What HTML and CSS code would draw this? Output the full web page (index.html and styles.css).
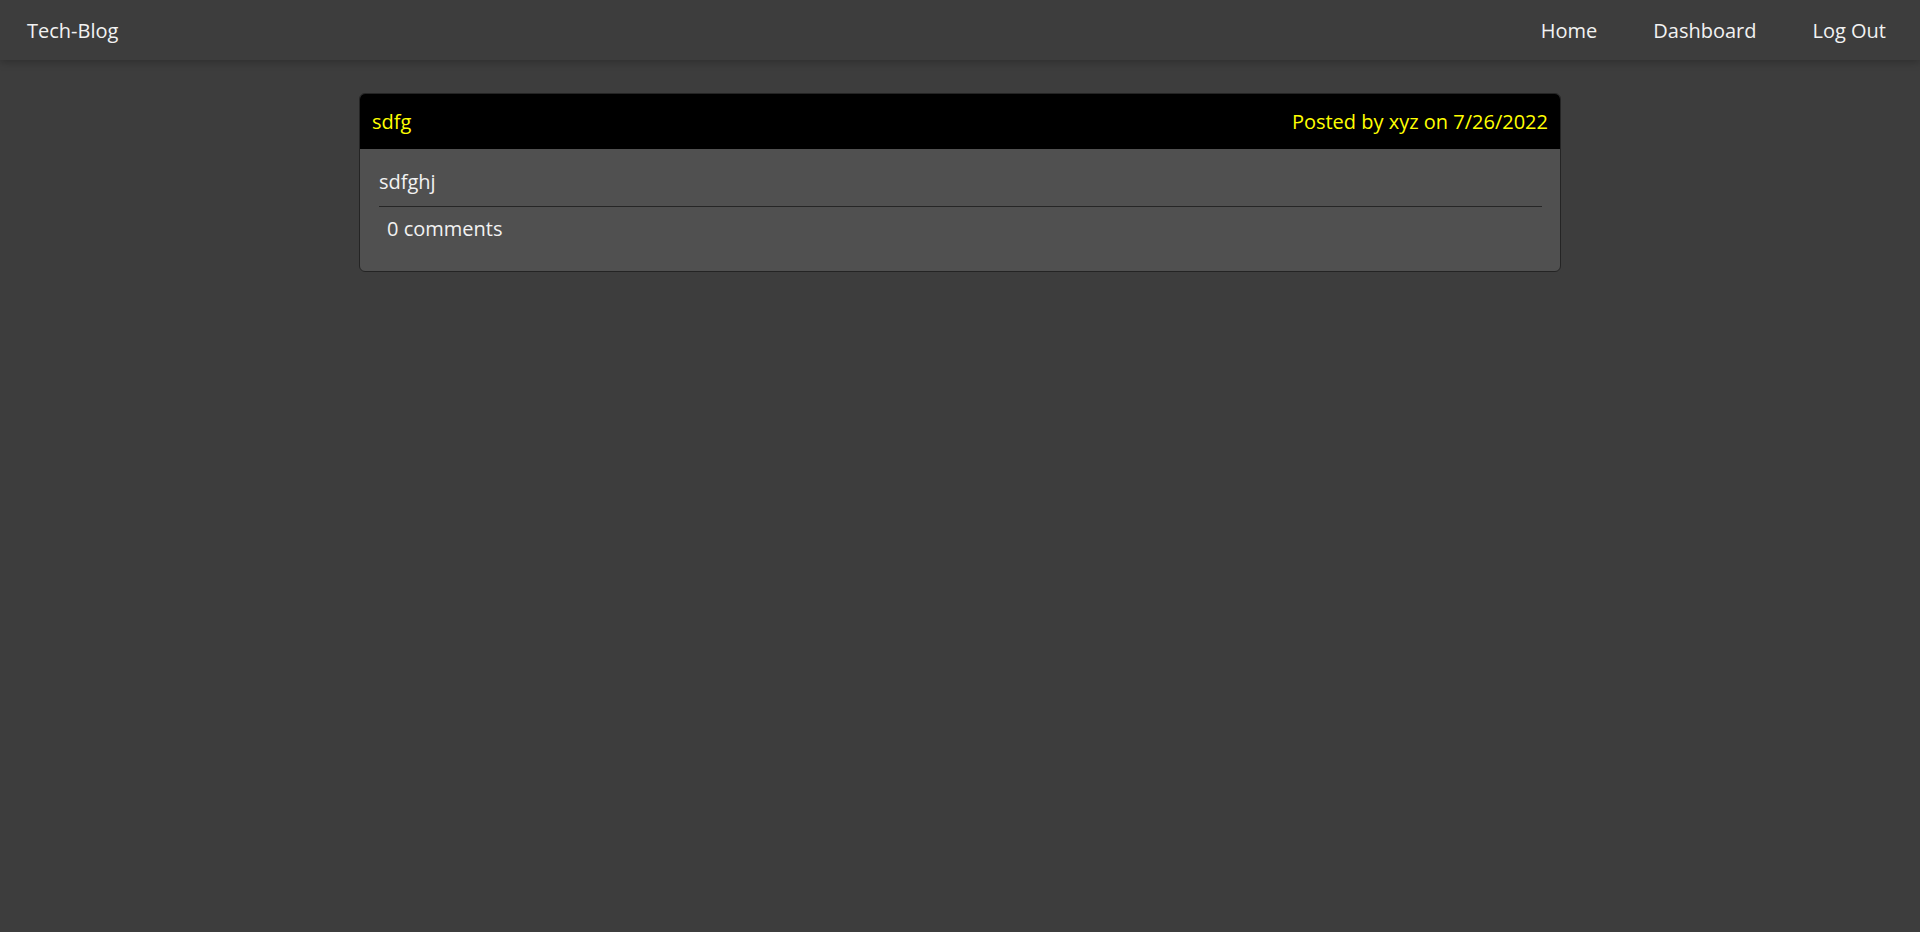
FILE: index.html
```html
<!DOCTYPE html>
<html lang="en">
<head>
<meta charset="utf-8">
<title>Tech-Blog</title>
<link rel="stylesheet" href="styles.css">
</head>
<body>
<header class="nav">
  <a class="brand" href="#">Tech-Blog</a>
  <nav class="links">
    <a href="#">Home</a>
    <a href="#">Dashboard</a>
    <a href="#">Log Out</a>
  </nav>
</header>
<main class="main">
  <article class="post">
    <div class="post-head">
      <span class="post-title">sdfg</span>
      <span class="post-meta">Posted by xyz on 7/26/2022</span>
    </div>
    <div class="post-body">
      <p class="post-text">sdfghj</p>
      <hr class="post-rule">
      <p class="post-comments">0 comments</p>
    </div>
  </article>
</main>
</body>
</html>
```
FILE: styles.css
```css
html, body {
  margin: 0;
  padding: 0;
}
body {
  background: #3d3d3d;
  font-family: "Open Sans", "Liberation Sans", sans-serif;
  color: #f2f2f2;
  min-height: 932px;
}
a {
  color: #f2f2f2;
  text-decoration: none;
}
.nav {
  height: 60px;
  display: flex;
  align-items: center;
  justify-content: space-between;
  padding: 0 34px 0 27px;
  background: #3d3d3d;
  box-shadow: 0 2px 8px rgba(0, 0, 0, 0.25);
  font-size: 20px;
}
.links {
  display: flex;
  gap: 56px;
}
.main {
  padding-top: 33px;
  display: flex;
  justify-content: center;
}
.post {
  width: 1200px;
  border: 1px solid #242424;
  border-radius: 6px;
  overflow: hidden;
  background: #505050;
}
.post-head {
  height: 55px;
  background: #000;
  color: #ffff00;
  display: flex;
  align-items: center;
  justify-content: space-between;
  padding: 0 12px;
  font-size: 20px;
}
.post-body {
  padding: 19px 18px 28px 19px;
  font-size: 20px;
}
.post-text {
  margin: 0;
  line-height: 28px;
  padding-bottom: 10px;
}
.post-rule {
  margin: 0;
  border: 0;
  border-top: 1px solid #262626;
}
.post-comments {
  margin: 8px 0 0 8px;
  line-height: 28px;
}
```
